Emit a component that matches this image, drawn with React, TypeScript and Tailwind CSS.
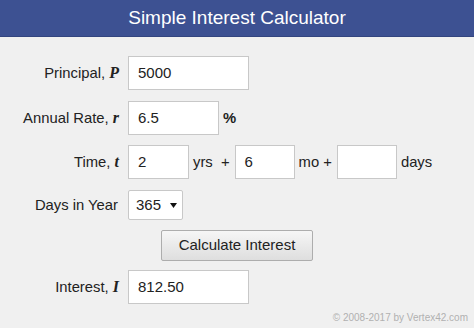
import React from 'react';

const font = { fontFamily: '"Liberation Sans", Arial, sans-serif' };

function Var({ children }: { children: React.ReactNode }) {
  return (
    <span className="font-bold italic text-[16px]" style={{ fontFamily: '"Liberation Serif", "Times New Roman", serif' }}>
      {children}
    </span>
  );
}

function Field({ value, w }: { value: string; w: string }) {
  return (
    <div className={`${w} h-[34px] flex items-center border border-[#c8c8c8] bg-white pl-[9px] text-[15px] text-[#222]`}>
      {value}
    </div>
  );
}

function Row({ label, mt, children }: { label: React.ReactNode; mt: string; children: React.ReactNode }) {
  return (
    <div className={`flex items-center ${mt}`}>
      <div className="w-[120px] pr-[1px] text-right text-[14.8px] text-[#222] shrink-0">{label}</div>
      <div className="ml-[8px] flex items-center text-[14.8px] text-[#222]">{children}</div>
    </div>
  );
}

export default function App() {
  return (
    <div className="w-[474px] h-[328px] bg-[#f0f0f0] flex flex-col overflow-hidden" style={font}>
      <div className="h-[37px] shrink-0 bg-[#3d5192] border-b border-[#33457f] flex items-center justify-center text-white text-[19px]">
        Simple Interest Calculator
      </div>

      <Row mt="mt-[19px]" label={<>Principal, <Var>P</Var></>}>
        <Field value="5000" w="w-[121px]" />
      </Row>

      <Row mt="mt-[11px]" label={<>Annual Rate, <Var>r</Var></>}>
        <Field value="6.5" w="w-[91px]" />
        <span className="ml-[4px] font-bold">%</span>
      </Row>

      <Row mt="mt-[10px]" label={<>Time, <Var>t</Var></>}>
        <Field value="2" w="w-[61px]" />
        <span className="ml-[4px] mr-[5px]">yrs&nbsp; +</span>
        <Field value="6" w="w-[60px]" />
        <span className="ml-[4px] mr-[5px]">mo +</span>
        <Field value="" w="w-[60px]" />
        <span className="ml-[4px]">days</span>
      </Row>

      <Row mt="mt-[11px]" label={<span className="pr-[1px]">Days in Year</span>}>
        <div className="w-[55px] h-[30px] flex items-center border border-[#c8c8c8] bg-white rounded-[2px] pl-[7px] text-[15px]">
          365
          <svg width="7" height="5" viewBox="0 0 7 5" className="ml-[9px]">
            <path d="M0 0 L7 0 L3.5 5 Z" fill="#111" />
          </svg>
        </div>
      </Row>

      <div className="mt-[10px] flex">
        <button
          type="button"
          className="ml-[161px] w-[152px] h-[31px] border border-[#adadad] rounded-[2px] bg-gradient-to-b from-[#f6f6f6] to-[#dedede] text-[15px] text-[#222]"
        >
          Calculate Interest
        </button>
      </div>

      <Row mt="mt-[9px]" label={<>Interest, <Var>I</Var></>}>
        <Field value="812.50" w="w-[121px]" />
      </Row>

      <div className="mt-[6px] pr-[6px] text-right text-[10px] text-[#b0b0b0]">
        © 2008-2017 by Vertex42.com
      </div>
    </div>
  );
}
